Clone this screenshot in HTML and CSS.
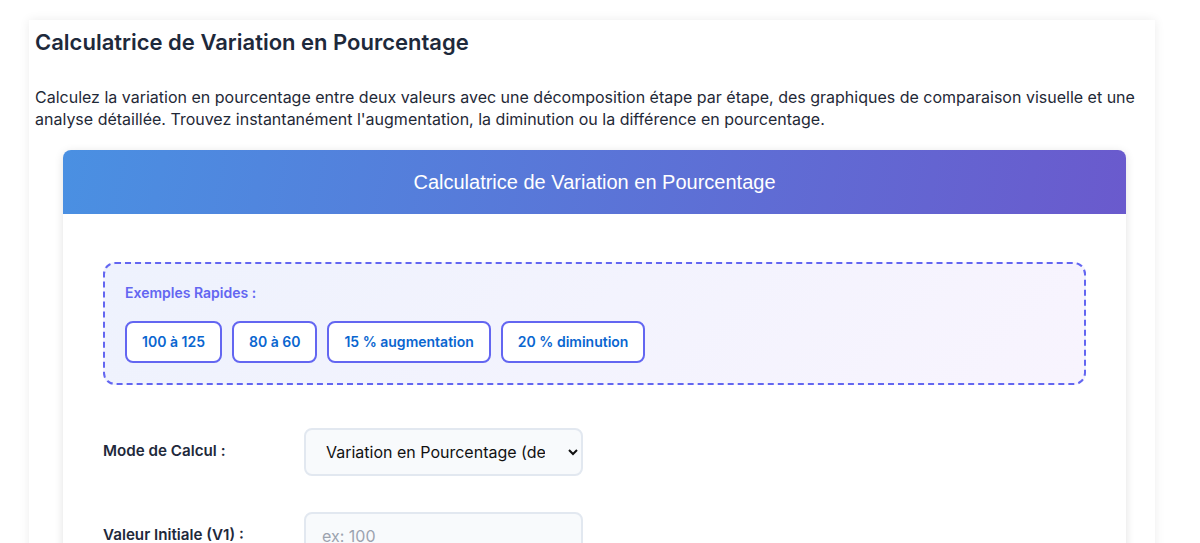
FILE: index.html
```html
<!DOCTYPE html>
<html lang="fr">
<head>
    <meta charset="UTF-8">
    <meta name="viewport" content="width=device-width, initial-scale=1.0">
    <title>Calculatrice de Variation en Pourcentage</title>
    <link rel="stylesheet" href="styles.css">
</head>
<body>
    <main class="page">
        <h2 class="page-title">Calculatrice de Variation en Pourcentage</h2>
        <p class="page-intro">Calculez la variation en pourcentage entre deux valeurs avec une décomposition étape par étape, des graphiques de comparaison visuelle et une analyse détaillée. Trouvez instantanément l'augmentation, la diminution ou la différence en pourcentage.</p>

        <div class="calc-card">
            <div class="calc-header">Calculatrice de Variation en Pourcentage</div>
            <div class="calc-body">
                <div class="quick-examples">
                    <div class="quick-label">Exemples Rapides :</div>
                    <div class="quick-buttons">
                        <button class="quick-btn">100 à 125</button>
                        <button class="quick-btn">80 à 60</button>
                        <button class="quick-btn">15 % augmentation</button>
                        <button class="quick-btn">20 % diminution</button>
                    </div>
                </div>

                <div class="form-row">
                    <label for="mode" class="form-label">Mode de Calcul :</label>
                    <select id="mode" class="form-field">
                        <option>Variation en Pourcentage (de V1 à V2)</option>
                        <option>Augmentation en Pourcentage</option>
                        <option>Diminution en Pourcentage</option>
                    </select>
                </div>

                <div class="form-row">
                    <label for="v1" class="form-label">Valeur Initiale (V1) :</label>
                    <input type="number" id="v1" class="form-field" placeholder="ex: 100">
                </div>

                <div class="form-row">
                    <label for="v2" class="form-label">Valeur Finale (V2) :</label>
                    <input type="number" id="v2" class="form-field" placeholder="ex: 125">
                </div>
            </div>
        </div>
    </main>
</body>
</html>
```

FILE: styles.css
```css
* {
    box-sizing: border-box;
}

body {
    margin: 0;
    background: #fff;
    font-family: Inter, 'Noto Sans', sans-serif;
    color: #1e293b;
}

.page {
    width: 1126px;
    margin: 20px 0 40px 29px;
    padding: 9px 6px 40px;
    background: #fff;
    box-shadow: 0 0 10px rgba(0, 0, 0, 0.08);
}

.page-title {
    margin: 0 0 31px;
    font-size: 22px;
    line-height: 26px;
    font-weight: 600;
    color: #1e293b;
}

.page-intro {
    margin: 0 0 20px;
    font-size: 16px;
    line-height: 22px;
    color: #1f2937;
}

.calc-card {
    margin: 0 23px 0 28px;
    border-radius: 8px;
    background: #fff;
    box-shadow: 0 2px 10px rgba(0, 0, 0, 0.12);
}

.calc-header {
    height: 64px;
    display: flex;
    align-items: center;
    justify-content: center;
    border-radius: 8px 8px 0 0;
    background: linear-gradient(100deg, #4a90e2, #6a5acd);
    color: #fff;
    font-family: 'Liberation Sans', Arial, sans-serif;
    font-size: 20px;
}

.calc-body {
    padding: 48px 40px 40px;
}

.quick-examples {
    padding: 20px;
    border: 2px dashed #6366f1;
    border-radius: 12px;
    background: linear-gradient(135deg, #eef2fd, #f8f4fe);
}

.quick-label {
    font-size: 14px;
    line-height: 18px;
    font-weight: 600;
    color: #6366f1;
    margin-bottom: 19px;
}

.quick-buttons {
    display: flex;
    gap: 10px;
}

.quick-btn {
    padding: 10px 15px;
    border: 2px solid #6366f1;
    border-radius: 8px;
    background: #fff;
    color: #0a66d0;
    font-family: inherit;
    font-size: 14px;
    line-height: 18px;
    font-weight: 600;
    cursor: pointer;
}

.form-row {
    display: flex;
    align-items: center;
    margin-top: 43px;
}

.form-row + .form-row {
    margin-top: 36px;
}

.form-label {
    width: 201px;
    flex-shrink: 0;
    padding-bottom: 4px;
    font-size: 15.2px;
    font-weight: 600;
    color: #1e293b;
}

.form-field {
    width: 279px;
    height: 48px;
    padding: 0 12px 0 16px;
    border: 2px solid #e2e8f0;
    border-radius: 8px;
    background: #f8fafc;
    font-family: inherit;
    font-size: 16px;
    color: #111;
    outline: none;
}

select.form-field {
    padding-right: 20px;
}

.form-field::placeholder {
    color: #9ca3af;
}
```
